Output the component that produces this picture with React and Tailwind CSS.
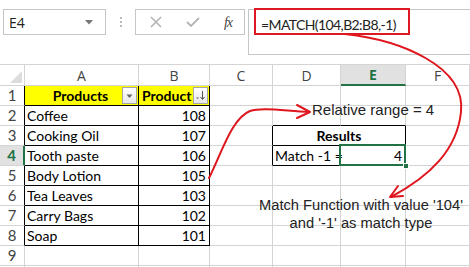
import React from "react";

const grid = "border-r border-b border-[#d4d4d4]";
const cellFont = "font-['Lato','Liberation_Sans',sans-serif] text-[14px] text-black whitespace-nowrap";

const products = [
  ["Coffee", 108],
  ["Cooking Oil", 107],
  ["Tooth paste", 106],
  ["Body Lotion", 105],
  ["Tea Leaves", 103],
  ["Carry Bags", 102],
  ["Soap", 101],
];

const RowHead = ({ n, active, edge }) => (
  <div
    className={
      "flex items-center justify-center border-b border-[#d4d4d4] border-r font-['Lato',sans-serif] text-[15px] " +
      (active
        ? "font-bold text-[#217346] border-r-2 border-r-[#217346] bg-[#e1e1e1]"
        : edge
        ? "text-[#444] border-r-black"
        : "text-[#444]")
    }
  >
    {n}
  </div>
);

const FilterBtn = ({ sort }) => (
  <div className="w-[15px] h-[17px] border border-[#a6a6a6] bg-gradient-to-b from-white to-[#e8e8e8] flex items-center justify-center">
    {sort ? (
      <svg width="11" height="11" viewBox="0 0 11 11">
        <path d="M1 7.5 L2.5 9 L4 7.5" fill="#666" />
        <path d="M7.5 1 V9 M5.5 7 L7.5 9.5 L9.5 7" stroke="#555" strokeWidth="1" fill="none" />
      </svg>
    ) : (
      <svg width="9" height="6" viewBox="0 0 9 6">
        <path d="M1.5 1.5 H7.5 L4.5 5 Z" fill="#666" />
      </svg>
    )}
  </div>
);

export default function App() {
  return (
    <div className="relative w-[470px] h-[267px] overflow-hidden bg-white">
      {/* formula bar area */}
      <div className="h-[64px] flex items-start font-['Open_Sans','Noto_Sans',sans-serif]">
        <div className="ml-[3px] mt-[9px] w-[103px] h-[26px] border border-[#c6c6c6] flex items-center justify-between pl-[5px] pr-[12px] text-[14px] text-[#222]">
          <span>E4</span>
          <svg width="8" height="5" viewBox="0 0 8 5">
            <path d="M0 0 H8 L4 4.5 Z" fill="#777" />
          </svg>
        </div>
        <div className="ml-[14px] mt-[17px] flex flex-col gap-[2px]">
          <div className="w-[2px] h-[2px] bg-[#bbb]" />
          <div className="w-[2px] h-[2px] bg-[#bbb]" />
          <div className="w-[2px] h-[2px] bg-[#bbb]" />
        </div>
        <div className="ml-[13px] mt-[9px] w-[110px] h-[26px] border border-[#c6c6c6] flex items-center pl-[14px] pr-[12px] justify-between">
          <svg width="12" height="12" viewBox="0 0 12 12">
            <path d="M1 1 L11 11 M11 1 L1 11" stroke="#b4b4b4" strokeWidth="1.6" />
          </svg>
          <svg width="14" height="12" viewBox="0 0 14 12">
            <path d="M1 6 L5 10 L13 2" stroke="#b4b4b4" strokeWidth="1.8" fill="none" />
          </svg>
          <span className="font-['Liberation_Serif',serif] italic text-[14px] text-[#444] tracking-[-1px]">fx</span>
        </div>
        <div className="ml-[3px] mt-[9px] flex-1 h-[46px] border border-[#c6c6c6] border-r-0 pl-[12px] pt-[4px] font-['Lato',sans-serif] text-[14px] tracking-[-0.6px] text-[#222]">
          =MATCH(104,B2:B8,-1)
        </div>
      </div>

      {/* sheet */}
      <div className="grid grid-cols-[25px_114px_71px_63px_68px_65px_64px] grid-rows-[21px_repeat(10,20px)] border-t border-[#d4d4d4]">
        {/* column headers */}
        <div className={grid + " flex items-end justify-end p-[2px]"}>
          <svg width="12" height="12" viewBox="0 0 12 12">
            <path d="M12 0 V12 H0 Z" fill="#dcdcdc" />
          </svg>
        </div>
        {["A", "B", "C", "D"].map((c) => (
          <div key={c} className={grid + " flex items-center justify-center font-['Open_Sans',sans-serif] text-[14px] text-[#444]"}>
            {c}
          </div>
        ))}
        <div className="border-r border-[#d4d4d4] border-b-2 border-b-[#217346] bg-[#e1e1e1] flex items-center justify-center font-['Open_Sans',sans-serif] font-bold text-[14px] text-[#217346]">
          E
        </div>
        <div className={grid + " flex items-center justify-center font-['Open_Sans',sans-serif] text-[14px] text-[#444]"}>F</div>

        {/* row 1 */}
        <RowHead n={1} edge />
        <div className={"border-r border-b border-black bg-[#ffff00] flex items-center pr-[1px] " + cellFont}>
          <span className="flex-1 text-center font-bold pl-[14px]">Products</span>
          <FilterBtn />
        </div>
        <div className={"border-r border-b border-black bg-[#ffff00] flex items-center pl-[3px] pr-[1px] justify-between " + cellFont}>
          <span className="font-bold">Product</span>
          <FilterBtn sort />
        </div>
        <div className={grid} />
        <div className={grid} />
        <div className={grid} />
        <div className={grid} />

        {products.map(([name, val], i) => {
          const r = i + 2;
          return (
            <React.Fragment key={r}>
              <RowHead n={r} active={r === 4} edge />
              <div className={"border-r border-b border-black flex items-center pl-[2px] " + cellFont}>{name}</div>
              <div className={"border-r border-b border-black flex items-center justify-end pr-[3px] " + cellFont}>{val}</div>
              {r === 2 && (
                <>
                  <div className={grid} />
                  <div className="border-r border-[#d4d4d4] border-b border-b-black" />
                  <div className="border-r border-[#d4d4d4] border-b border-b-black" />
                  <div className={grid} />
                </>
              )}
              {r === 3 && (
                <>
                  <div className="border-b border-[#d4d4d4] border-r border-r-black" />
                  <div className={"col-span-2 border-r border-b border-black flex items-center justify-center font-bold " + cellFont}>
                    Results
                  </div>
                  <div className={grid} />
                </>
              )}
              {r === 4 && (
                <>
                  <div className="border-b border-[#d4d4d4] border-r border-r-black" />
                  <div className={"border-r border-b border-black flex items-center pl-[2px] " + cellFont}>Match -1 =</div>
                  <div className={"relative border-r border-b border-black flex items-center justify-end pr-[3px] " + cellFont}>
                    4
                    <div className="absolute -left-[2px] -top-[2px] -right-[1px] -bottom-[1px] border-2 border-[#217346]" />
                    <div className="absolute -right-[4px] -bottom-[4px] w-[6px] h-[6px] bg-[#217346] border border-white" />
                  </div>
                  <div className={grid} />
                </>
              )}
              {r > 4 && (
                <>
                  <div className={grid} />
                  <div className={grid} />
                  <div className={grid} />
                  <div className={grid} />
                </>
              )}
            </React.Fragment>
          );
        })}

        {[9, 10].map((r) => (
          <React.Fragment key={r}>
            <RowHead n={r === 9 ? r : ""} />
            <div className={grid} />
            <div className={grid} />
            <div className={grid} />
            <div className={grid} />
            <div className={grid} />
            <div className={grid} />
          </React.Fragment>
        ))}
      </div>

      {/* annotations */}
      <div className="absolute left-[254px] top-[8px] w-[156px] h-[27px] border-2 border-[#dd1a22]" />
      <div className="absolute left-[312px] top-[101px] font-['Liberation_Sans',Arial,sans-serif] text-[15px] leading-[18px] text-[#222]">
        Relative range = 4
      </div>
      <div className="absolute left-[250px] top-[196px] w-[222px] text-center font-['Liberation_Sans',Arial,sans-serif] text-[14.7px] leading-[18px] text-[#222]">
        Match Function with value '104'
        <br />
        and '-1' as match type
      </div>
      <svg className="absolute left-0 top-0 pointer-events-none" width="470" height="267" viewBox="0 0 470 267">
        <g stroke="#e0161e" strokeWidth="2" fill="none" strokeLinecap="round" strokeLinejoin="round">
          <path d="M209 178 C 222 152 232 118 250 111 C 262 107 285 111 309 112" />
          <path d="M297 105 L310 112 L297 118" />
          <path d="M345 34 C 400 40 466 66 461 112 C 457 150 430 176 391 197" />
          <path d="M398 186 L390 197 L403 196" />
        </g>
      </svg>
    </div>
  );
}
